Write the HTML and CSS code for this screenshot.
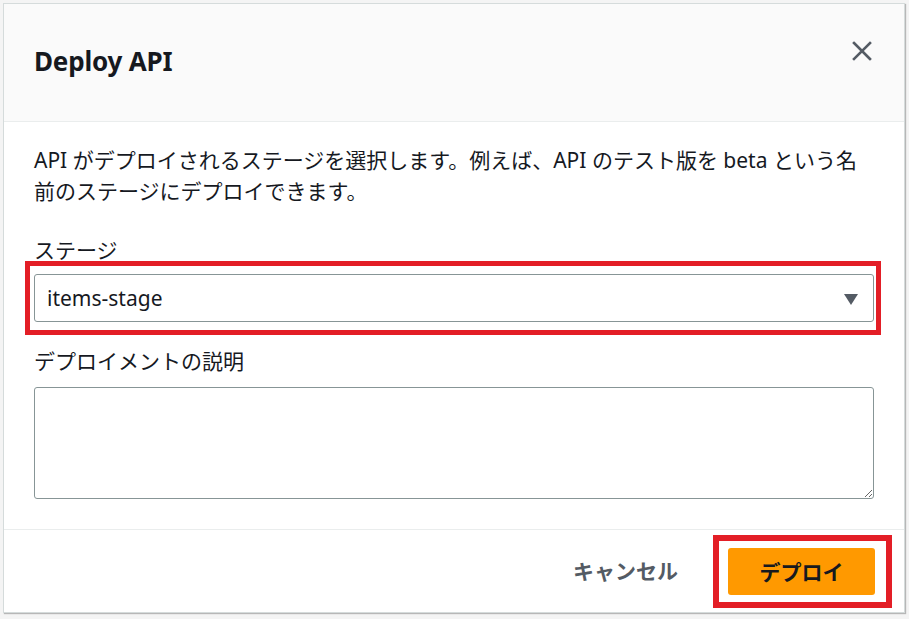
FILE: index.html
```html
<!DOCTYPE html>
<html lang="ja">
<head>
<meta charset="utf-8">
<title>Deploy API</title>
<link rel="stylesheet" href="styles.css">
</head>
<body>
<div class="dialog">
  <div class="dialog-header">
    <h2 class="dialog-title">Deploy API</h2>
    <button class="close-btn" type="button" aria-label="閉じる">
      <svg class="close-icon" viewBox="0 0 20 20" width="20" height="20" aria-hidden="true">
        <path d="M2 2 L18 18 M18 2 L2 18" stroke="#545b64" stroke-width="2.6" stroke-linecap="square" fill="none"/>
      </svg>
    </button>
  </div>
  <div class="dialog-body">
    <p class="description">API がデプロイされるステージを選択します。例えば、API のテスト版を beta という名前のステージにデプロイできます。</p>
    <div class="field">
      <label class="field-label">ステージ</label>
      <div class="select-wrap">
        <div class="select">
          <span class="select-value">items-stage</span>
          <svg class="caret" viewBox="0 0 14 11" width="14" height="11" aria-hidden="true">
            <polygon points="0,0 14,0 7,11" fill="#545b64"/>
          </svg>
        </div>
        <div class="highlight highlight-select"></div>
      </div>
    </div>
    <div class="field field-2">
      <label class="field-label">デプロイメントの説明</label>
      <textarea class="textarea"></textarea>
    </div>
  </div>
  <div class="dialog-footer">
    <button class="btn-cancel" type="button">キャンセル</button>
    <div class="deploy-wrap">
      <button class="btn-deploy" type="button">デプロイ</button>
      <div class="highlight highlight-deploy"></div>
    </div>
  </div>
</div>
</body>
</html>
```

FILE: styles.css
```css
* {
  box-sizing: border-box;
}

html, body {
  margin: 0;
  padding: 0;
}

body {
  width: 909px;
  height: 619px;
  background: #f4f4f4;
  font-family: "Noto Sans", "Noto Sans CJK JP", sans-serif;
  color: #16191f;
  padding: 3px 0 0 3px;
  overflow: hidden;
}

.dialog {
  width: 902px;
  height: 610px;
  background: #ffffff;
  border: 1px solid #d5dbdb;
  box-shadow: 1px 1px 1px rgba(0, 0, 0, 0.25);
  display: flex;
  flex-direction: column;
}

.dialog-header {
  background: #fafafa;
  border-bottom: 1px solid #eaeded;
  padding: 41px 30px 0 30px;
  height: 118px;
  display: flex;
  justify-content: space-between;
  align-items: flex-start;
}

.dialog-title {
  margin: 0;
  font-size: 26px;
  line-height: 32px;
  font-weight: 700;
  color: #16191f;
  letter-spacing: -0.2px;
}

.close-btn {
  margin: -4px 2px 0 0;
  padding: 0;
  border: 0;
  background: transparent;
  width: 20px;
  height: 20px;
  display: block;
}

.close-icon {
  display: block;
}

.dialog-body {
  padding: 23px 30px 0 30px;
  flex: 1;
}

.description {
  margin: 0 0 28px 0;
  font-size: 21px;
  line-height: 31px;
}

.field {
  display: flex;
  flex-direction: column;
}

.field-label {
  font-size: 21px;
  line-height: 31px;
  margin-bottom: 8px;
}

.field-2 {
  margin-top: 24px;
}

.field-2 .field-label {
  margin-bottom: 10px;
}

.select-wrap {
  position: relative;
}

.select {
  height: 48px;
  border: 1px solid #879596;
  border-radius: 3px;
  background: #ffffff;
  display: flex;
  align-items: center;
  justify-content: space-between;
  padding: 0 15px 0 12px;
}

.select-value {
  font-size: 21px;
  line-height: 31px;
  color: #16191f;
}

.caret {
  display: block;
  margin-top: 2px;
}

.textarea {
  display: block;
  width: 100%;
  height: 112px;
  border: 1px solid #879596;
  border-radius: 3px;
  resize: vertical;
  font-family: inherit;
  font-size: 21px;
  background: #ffffff;
}

.highlight {
  position: absolute;
  border: 5px solid #e31e26;
  pointer-events: none;
}

.highlight-select {
  top: -13px;
  bottom: -13px;
  left: -9px;
  right: -7px;
}

.dialog-footer {
  border-top: 1px solid #eaeded;
  height: 83px;
  padding: 0 29px 0 30px;
  display: flex;
  justify-content: flex-end;
  align-items: center;
}

.btn-cancel {
  border: 0;
  background: transparent;
  font-family: inherit;
  font-size: 21px;
  font-weight: 700;
  color: #545b64;
  padding: 0;
  margin-right: 50px;
  line-height: 31px;
}

.deploy-wrap {
  position: relative;
}

.btn-deploy {
  display: block;
  width: 147px;
  height: 47px;
  background: #ff9900;
  border: 0;
  border-radius: 3px;
  font-family: inherit;
  font-size: 21px;
  font-weight: 700;
  color: #16191f;
  padding: 0;
}

.highlight-deploy {
  border-width: 6px;
  top: -13px;
  bottom: -13px;
  left: -15px;
  right: -17px;
}
```
